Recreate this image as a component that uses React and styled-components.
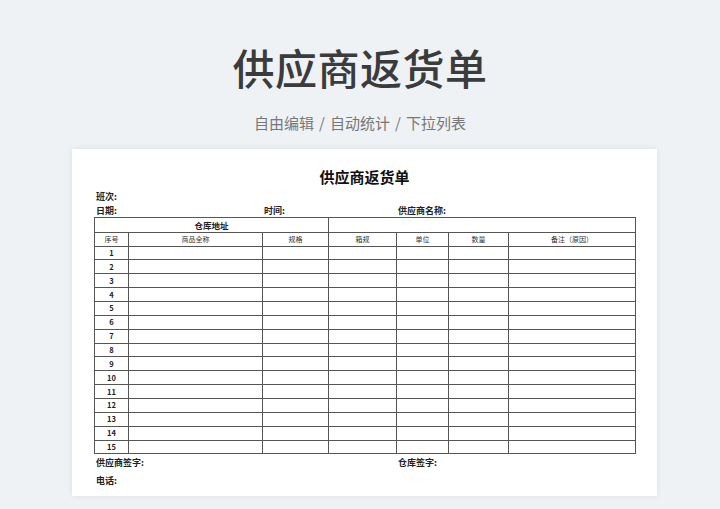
import React from 'react'
import styled, { createGlobalStyle } from 'styled-components'

const GlobalStyle = createGlobalStyle`
  body {
    margin: 0;
    background: #eef2f5;
    font-family: "Noto Sans CJK SC", "Noto Sans", sans-serif;
  }
`

const Page = styled.div`
  width: 720px;
  height: 509px;
  overflow: hidden;
  display: flex;
  flex-direction: column;
  align-items: center;
`

const Title = styled.h1`
  margin: 42px 0 0;
  height: 50px;
  line-height: 50px;
  font-size: 42px;
  font-weight: 500;
  color: #3b3b3b;
  letter-spacing: 0.5px;
`

const Subtitle = styled.div`
  margin-top: 21px;
  height: 20px;
  line-height: 20px;
  font-size: 15px;
  color: #777;
  span {
    margin: 0 5px;
  }
`

const Paper = styled.div`
  margin-top: 16px;
  margin-left: 9px;
  width: 585px;
  height: 347px;
  box-sizing: border-box;
  padding: 18px 22px 0;
  background: #fff;
  box-shadow: 0 0 6px rgba(0, 0, 0, 0.08);
  color: #222;
`

const SheetTitle = styled.div`
  height: 20px;
  line-height: 20px;
  text-align: center;
  font-size: 15px;
  font-weight: 700;
  color: #111;
`

const InfoRow = styled.div`
  display: flex;
  height: 12px;
  line-height: 12px;
  margin-top: ${p => p.$gap || 0}px;
  font-size: 9px;
  font-weight: 700;
  padding-left: 2px;
`

const InfoCell = styled.div`
  width: ${p => p.$w}px;
  flex: none;
`

const Table = styled.table`
  border-collapse: collapse;
  table-layout: fixed;
  width: 541px;
  td {
    border: 1px solid #555;
    padding: 0;
    text-align: center;
    overflow: hidden;
    white-space: nowrap;
  }
`

const GroupRow = styled.tr`
  height: 15px;
  td {
    font-size: 8.5px;
    font-weight: 700;
    line-height: 13px;
  }
`

const HeadRow = styled.tr`
  height: 13.5px;
  td {
    font-size: 7px;
    line-height: 12px;
    color: #333;
  }
`

const BodyRow = styled.tr`
  height: 13.87px;
  td {
    font-size: 7.5px;
    font-weight: 700;
    line-height: 12px;
  }
`

const cols = [34, 134, 66, 68, 52, 60, 127]
const heads = ['序号', '商品全称', '规格', '箱规', '单位', '数量', '备注（原因）']
const rows = Array.from({ length: 15 }, (_, i) => i + 1)

const App = () => (
  <Page>
    <GlobalStyle />
    <Title>供应商返货单</Title>
    <Subtitle>
      自由编辑<span>/</span>自动统计<span>/</span>下拉列表
    </Subtitle>
    <Paper>
      <SheetTitle>供应商返货单</SheetTitle>
      <InfoRow $gap={4}>
        <InfoCell $w={168}>班次:</InfoCell>
      </InfoRow>
      <InfoRow $gap={2}>
        <InfoCell $w={168}>日期:</InfoCell>
        <InfoCell $w={134}>时间:</InfoCell>
        <InfoCell $w={150}>供应商名称:</InfoCell>
      </InfoRow>
      <Table>
        <colgroup>
          {cols.map((w, i) => <col key={i} style={{ width: w }} />)}
        </colgroup>
        <tbody>
          <GroupRow>
            <td colSpan={3}>仓库地址</td>
            <td colSpan={4}></td>
          </GroupRow>
          <HeadRow>
            {heads.map(h => <td key={h}>{h}</td>)}
          </HeadRow>
          {rows.map(n => (
            <BodyRow key={n}>
              <td>{n}</td>
              {cols.slice(1).map((_, i) => <td key={i}></td>)}
            </BodyRow>
          ))}
        </tbody>
      </Table>
      <InfoRow $gap={3}>
        <InfoCell $w={302}>供应商签字:</InfoCell>
        <InfoCell $w={150}>仓库签字:</InfoCell>
      </InfoRow>
      <InfoRow $gap={6}>
        <InfoCell $w={168}>电话:</InfoCell>
      </InfoRow>
    </Paper>
  </Page>
)

export default App
